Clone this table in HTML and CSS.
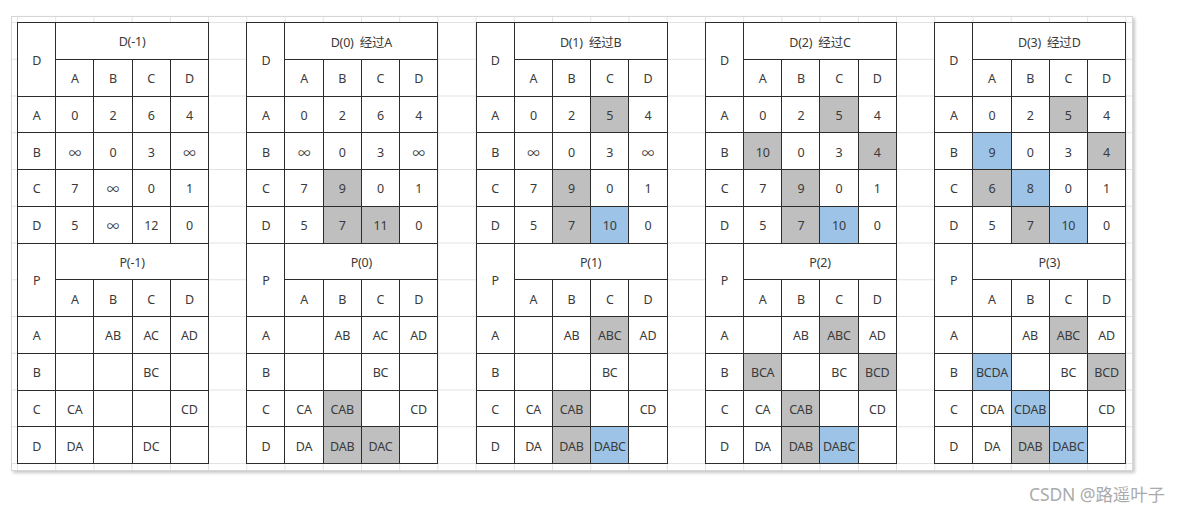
FILE: index.html
```html
<!DOCTYPE html>
<html lang="zh">
<head>
<meta charset="utf-8">
<title>Floyd</title>
<link rel="stylesheet" href="styles.css">
</head>
<body>
<div class="page">
  <div class="sheet">
    <table class="matrix">
      <colgroup><col><col><col><col><col></colgroup>
      <tr><th rowspan="2">D</th><th colspan="4" class="title">D(-1)</th></tr>
      <tr><th>A</th><th>B</th><th>C</th><th>D</th></tr>
      <tr><th>A</th><td>0</td><td>2</td><td>6</td><td>4</td></tr>
      <tr><th>B</th><td>∞</td><td>0</td><td>3</td><td>∞</td></tr>
      <tr><th>C</th><td>7</td><td>∞</td><td>0</td><td>1</td></tr>
      <tr><th>D</th><td>5</td><td>∞</td><td>12</td><td>0</td></tr>
      <tr><th rowspan="2">P</th><th colspan="4" class="title">P(-1)</th></tr>
      <tr><th>A</th><th>B</th><th>C</th><th>D</th></tr>
      <tr><th>A</th><td></td><td>AB</td><td>AC</td><td>AD</td></tr>
      <tr><th>B</th><td></td><td></td><td>BC</td><td></td></tr>
      <tr><th>C</th><td>CA</td><td></td><td></td><td>CD</td></tr>
      <tr><th>D</th><td>DA</td><td></td><td>DC</td><td></td></tr>
    </table>

    <table class="matrix">
      <colgroup><col><col><col><col><col></colgroup>
      <tr><th rowspan="2">D</th><th colspan="4" class="title">D(0)  经过A</th></tr>
      <tr><th>A</th><th>B</th><th>C</th><th>D</th></tr>
      <tr><th>A</th><td>0</td><td>2</td><td>6</td><td>4</td></tr>
      <tr><th>B</th><td>∞</td><td>0</td><td>3</td><td>∞</td></tr>
      <tr><th>C</th><td>7</td><td class="g">9</td><td>0</td><td>1</td></tr>
      <tr><th>D</th><td>5</td><td class="g">7</td><td class="g">11</td><td>0</td></tr>
      <tr><th rowspan="2">P</th><th colspan="4" class="title">P(0)</th></tr>
      <tr><th>A</th><th>B</th><th>C</th><th>D</th></tr>
      <tr><th>A</th><td></td><td>AB</td><td>AC</td><td>AD</td></tr>
      <tr><th>B</th><td></td><td></td><td>BC</td><td></td></tr>
      <tr><th>C</th><td>CA</td><td class="g">CAB</td><td></td><td>CD</td></tr>
      <tr><th>D</th><td>DA</td><td class="g">DAB</td><td class="g">DAC</td><td></td></tr>
    </table>

    <table class="matrix">
      <colgroup><col><col><col><col><col></colgroup>
      <tr><th rowspan="2">D</th><th colspan="4" class="title">D(1)  经过B</th></tr>
      <tr><th>A</th><th>B</th><th>C</th><th>D</th></tr>
      <tr><th>A</th><td>0</td><td>2</td><td class="g">5</td><td>4</td></tr>
      <tr><th>B</th><td>∞</td><td>0</td><td>3</td><td>∞</td></tr>
      <tr><th>C</th><td>7</td><td class="g">9</td><td>0</td><td>1</td></tr>
      <tr><th>D</th><td>5</td><td class="g">7</td><td class="b">10</td><td>0</td></tr>
      <tr><th rowspan="2">P</th><th colspan="4" class="title">P(1)</th></tr>
      <tr><th>A</th><th>B</th><th>C</th><th>D</th></tr>
      <tr><th>A</th><td></td><td>AB</td><td class="g">ABC</td><td>AD</td></tr>
      <tr><th>B</th><td></td><td></td><td>BC</td><td></td></tr>
      <tr><th>C</th><td>CA</td><td class="g">CAB</td><td></td><td>CD</td></tr>
      <tr><th>D</th><td>DA</td><td class="g">DAB</td><td class="b">DABC</td><td></td></tr>
    </table>

    <table class="matrix">
      <colgroup><col><col><col><col><col></colgroup>
      <tr><th rowspan="2">D</th><th colspan="4" class="title">D(2)  经过C</th></tr>
      <tr><th>A</th><th>B</th><th>C</th><th>D</th></tr>
      <tr><th>A</th><td>0</td><td>2</td><td class="g">5</td><td>4</td></tr>
      <tr><th>B</th><td class="g">10</td><td>0</td><td>3</td><td class="g">4</td></tr>
      <tr><th>C</th><td>7</td><td class="g">9</td><td>0</td><td>1</td></tr>
      <tr><th>D</th><td>5</td><td class="g">7</td><td class="b">10</td><td>0</td></tr>
      <tr><th rowspan="2">P</th><th colspan="4" class="title">P(2)</th></tr>
      <tr><th>A</th><th>B</th><th>C</th><th>D</th></tr>
      <tr><th>A</th><td></td><td>AB</td><td class="g">ABC</td><td>AD</td></tr>
      <tr><th>B</th><td class="g">BCA</td><td></td><td>BC</td><td class="g">BCD</td></tr>
      <tr><th>C</th><td>CA</td><td class="g">CAB</td><td></td><td>CD</td></tr>
      <tr><th>D</th><td>DA</td><td class="g">DAB</td><td class="b">DABC</td><td></td></tr>
    </table>

    <table class="matrix">
      <colgroup><col><col><col><col><col></colgroup>
      <tr><th rowspan="2">D</th><th colspan="4" class="title">D(3)  经过D</th></tr>
      <tr><th>A</th><th>B</th><th>C</th><th>D</th></tr>
      <tr><th>A</th><td>0</td><td>2</td><td class="g">5</td><td>4</td></tr>
      <tr><th>B</th><td class="b">9</td><td>0</td><td>3</td><td class="g">4</td></tr>
      <tr><th>C</th><td class="g">6</td><td class="b">8</td><td>0</td><td>1</td></tr>
      <tr><th>D</th><td>5</td><td class="g">7</td><td class="b">10</td><td>0</td></tr>
      <tr><th rowspan="2">P</th><th colspan="4" class="title">P(3)</th></tr>
      <tr><th>A</th><th>B</th><th>C</th><th>D</th></tr>
      <tr><th>A</th><td></td><td>AB</td><td class="g">ABC</td><td>AD</td></tr>
      <tr><th>B</th><td class="b">BCDA</td><td></td><td>BC</td><td class="g">BCD</td></tr>
      <tr><th>C</th><td>CDA</td><td class="b">CDAB</td><td></td><td>CD</td></tr>
      <tr><th>D</th><td>DA</td><td class="g">DAB</td><td class="b">DABC</td><td></td></tr>
    </table>
  </div>
  <div class="watermark">CSDN @路遥叶子</div>
</div>
</body>
</html>
```

FILE: styles.css
```css
html, body {
  margin: 0;
  background: #ffffff;
}

body {
  font-family: "Noto Sans", "Noto Sans CJK SC", sans-serif;
  color: #3a3a3a;
}

.page {
  padding: 16px 0 0 11px;
}

.sheet {
  box-sizing: border-box;
  width: 1122px;
  height: 455px;
  border: 1px solid #d6d6d6;
  box-shadow: 2px 2px 3px rgba(0, 0, 0, 0.22);
  padding: 5px 0 0 5px;
  display: flex;
  align-items: flex-start;
  gap: 37.3px;
  background-color: #ffffff;
  background-image:
    linear-gradient(to right, #e2e2e2 1px, transparent 1px),
    linear-gradient(to bottom, #e2e2e2 1px, transparent 1px);
  background-size: 38.22px 36.75px;
  background-position: 5px 5px;
}

.matrix {
  border-collapse: collapse;
  table-layout: fixed;
  width: 192px;
  background: #ffffff;
  font-size: 12.5px;
}

.matrix tr {
  height: 36.75px;
}

.matrix th,
.matrix td {
  border: 1px solid #2c2c2c;
  padding: 2px 0 0;
  text-align: center;
  vertical-align: middle;
  font-weight: normal;
  white-space: pre;
  overflow: hidden;
  letter-spacing: -0.2px;
}

.matrix .title {
  white-space: pre;
}

.matrix .g {
  background: #bfbfbf;
}

.matrix .b {
  background: #9dc3e6;
}

.watermark {
  width: 1154px;
  margin-top: 13px;
  text-align: right;
  font-size: 17.5px;
  line-height: 20px;
  color: #ababab;
  letter-spacing: -0.1px;
}
```
